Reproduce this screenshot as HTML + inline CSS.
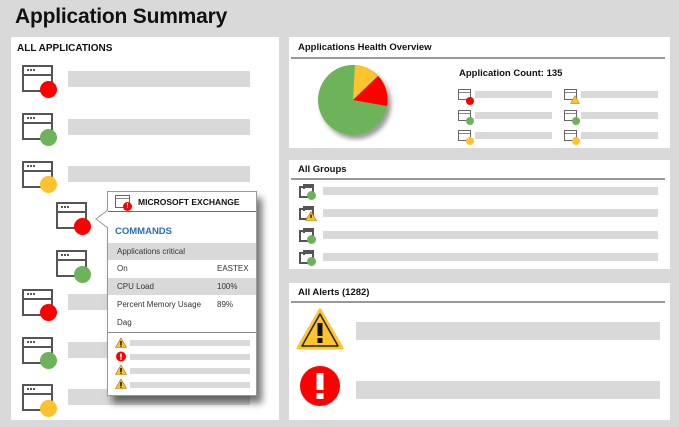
<!DOCTYPE html><html><head><style>
*{margin:0;padding:0;box-sizing:border-box}
body{width:679px;height:427px;background:#d9d9d9;position:relative;overflow:hidden;font-family:"Liberation Sans",sans-serif;color:#111}
.a{position:absolute}
.p{position:absolute;background:#fff}
.bar{position:absolute;background:#d9d9d9}
.win{position:absolute;width:31px;height:27px;border:2.5px solid #555;background:#fff}
.win:before{content:"";position:absolute;left:0;right:0;top:7px;border-top:2px solid #555}
.win:after{content:"";position:absolute;left:3px;top:2px;width:2px;height:2px;background:#555;box-shadow:3px 0 #555,6px 0 #555}
.dot{position:absolute;width:17px;height:17px;border-radius:50%}
.r{background:#f00}.g{background:#6db35a}.y{background:#fdc32d}
.h{position:absolute;font-weight:bold;font-size:10px}
.ln{position:absolute;height:2px;background:#999}
.sw{position:absolute;width:13px;height:11px;border:1.5px solid #666;background:#fff}
.sw:before{content:"";position:absolute;left:0;right:0;top:2px;border-top:1px solid #888}
.sd{position:absolute;width:8px;height:8px;border-radius:50%}
.fold{position:absolute;width:15px;height:12px;border:2px solid #555;background:#fff}
.fold:before{content:"";position:absolute;right:-2px;top:-4px;width:7px;height:3px;border:2px solid #555;border-bottom:none}
.row{position:absolute;left:0;width:148px;height:17px;font-size:8px;color:#333;padding:4px 0 0 9px}
</style></head><body>
<div class="a" style="left:15px;top:5px;font-size:21px;font-weight:bold;letter-spacing:-0.2px">Application Summary</div>

<div class="p" style="left:11px;top:37px;width:268px;height:383px"></div>
<div class="h" style="left:17px;top:43px;font-size:10px">ALL APPLICATIONS</div>

<div class="win" style="left:22px;top:65px"></div><div class="dot r" style="left:40px;top:81px"></div><div class="bar" style="left:68px;top:71px;width:182px;height:16px"></div>
<div class="win" style="left:22px;top:113px"></div><div class="dot g" style="left:40px;top:129px"></div><div class="bar" style="left:68px;top:119px;width:182px;height:16px"></div>
<div class="win" style="left:22px;top:161px"></div><div class="dot y" style="left:40px;top:176px"></div><div class="bar" style="left:68px;top:166px;width:182px;height:16px"></div>
<div class="win" style="left:56px;top:202px"></div><div class="dot r" style="left:74px;top:218px"></div>
<div class="win" style="left:56px;top:250px"></div><div class="dot g" style="left:74px;top:266px"></div>
<div class="win" style="left:22px;top:289px"></div><div class="dot r" style="left:40px;top:304px"></div><div class="bar" style="left:68px;top:294px;width:182px;height:16px"></div>
<div class="win" style="left:22px;top:337px"></div><div class="dot g" style="left:40px;top:352px"></div><div class="bar" style="left:68px;top:342px;width:182px;height:16px"></div>
<div class="win" style="left:22px;top:384px"></div><div class="dot y" style="left:40px;top:400px"></div><div class="bar" style="left:68px;top:389px;width:182px;height:16px"></div>

<!-- popup -->
<div class="a" style="left:107px;top:191px;width:150px;height:205px;background:#fff;border:1px solid #999;box-shadow:5px 7px 7px rgba(0,0,0,.55)">
<div class="sw" style="left:7px;top:3px;width:15px;height:13px"></div>
<div class="a" style="left:15px;top:10px;width:9px;height:9px;border-radius:50%;background:#f00;color:#fff;font-size:7px;font-weight:bold;text-align:center;line-height:9px">!</div>
<div class="h" style="left:30px;top:5px;font-size:8.5px">MICROSOFT EXCHANGE</div>
<div class="a" style="left:0;top:19px;width:148px;height:1px;background:#e33"></div>
<div class="h" style="left:7px;top:34px;font-size:9.5px;color:#2a6db5">COMMANDS</div>
<div class="row" style="top:51px;background:#d9d9d9">Applications critical</div>
<div class="row" style="top:68px">On<span class="a" style="left:109px">EASTEX</span></div>
<div class="row" style="top:86px;background:#d9d9d9">CPU Load<span class="a" style="left:109px">100%</span></div>
<div class="row" style="top:104px">Percent Memory Usage<span class="a" style="left:109px">89%</span></div>
<div class="row" style="top:122px">Dag</div>
<div class="a" style="left:0;top:140px;width:148px;height:1px;background:#888"></div>
<svg class="a" style="left:7px;top:145px" width="12" height="56" viewBox="0 0 12 56">
<path d="M6 1 L11.5 10.5 H0.5Z" fill="#fdc32d" stroke="#a07000" stroke-width=".6"/><rect x="5.3" y="4" width="1.4" height="4" fill="#000"/><rect x="5.3" y="8.6" width="1.4" height="1.2" fill="#000"/>
<circle cx="6" cy="19.5" r="5" fill="#f00"/><rect x="5.2" y="16.5" width="1.6" height="4" fill="#fff"/><rect x="5.2" y="21.3" width="1.6" height="1.4" fill="#fff"/>
<path d="M6 28 L11.5 37.5 H0.5Z" fill="#fdc32d" stroke="#a07000" stroke-width=".6"/><rect x="5.3" y="31" width="1.4" height="4" fill="#000"/><rect x="5.3" y="35.6" width="1.4" height="1.2" fill="#000"/>
<path d="M6 42 L11.5 51.5 H0.5Z" fill="#fdc32d" stroke="#a07000" stroke-width=".6"/><rect x="5.3" y="45" width="1.4" height="4" fill="#000"/><rect x="5.3" y="49.6" width="1.4" height="1.2" fill="#000"/>
</svg>
<div class="bar" style="left:22px;top:148px;width:120px;height:6px"></div>
<div class="bar" style="left:22px;top:162px;width:120px;height:6px"></div>
<div class="bar" style="left:22px;top:176px;width:120px;height:6px"></div>
<div class="bar" style="left:22px;top:190px;width:120px;height:6px"></div>
</div>
<svg class="a" style="left:95px;top:210px" width="14" height="18"><path d="M13 0 L1 9 L13 18" fill="#fff" stroke="#999"/></svg>

<!-- health -->
<div class="p" style="left:289px;top:37px;width:381px;height:111px"></div>
<div class="h" style="left:298px;top:42px;font-size:9.5px">Applications Health Overview</div>
<div class="ln" style="left:291px;top:57px;width:374px"></div>
<svg class="a" style="left:312px;top:60px" width="86" height="86" viewBox="0 0 86 86">
<defs><filter id="s"><feDropShadow dx="3" dy="4" stdDeviation="2.5" flood-opacity=".4"/></filter></defs>
<g filter="url(#s)">
<circle cx="41" cy="40" r="35" fill="#6db35a"/>
<path d="M41 40 L43 5 A35 35 0 0 1 66 16 Z" fill="#fdc32d"/>
<path d="M41 40 L66 16 A35 35 0 0 1 75 46 Z" fill="#f00"/>
</g></svg>
<div class="h" style="left:459px;top:68px;font-size:9.5px">Application Count: 135</div>
<div class="sw" style="left:458px;top:89px"></div><div class="sd r" style="left:466px;top:97px"></div><div class="bar" style="left:475px;top:91px;width:77px;height:7px"></div>
<div class="sw" style="left:458px;top:110px"></div><div class="sd g" style="left:466px;top:117px"></div><div class="bar" style="left:475px;top:112px;width:77px;height:7px"></div>
<div class="sw" style="left:458px;top:130px"></div><div class="sd y" style="left:466px;top:137px"></div><div class="bar" style="left:475px;top:132px;width:77px;height:7px"></div>
<div class="sw" style="left:564px;top:89px"></div><svg class="a" style="left:570px;top:95px" width="10" height="9"><path d="M5 0.5L9.5 8.5H0.5Z" fill="#fdc32d" stroke="#a07000" stroke-width=".5"/></svg><div class="bar" style="left:581px;top:91px;width:77px;height:7px"></div>
<div class="sw" style="left:564px;top:110px"></div><div class="sd g" style="left:572px;top:117px"></div><div class="bar" style="left:581px;top:112px;width:77px;height:7px"></div>
<div class="sw" style="left:564px;top:130px"></div><div class="sd y" style="left:572px;top:137px"></div><div class="bar" style="left:581px;top:132px;width:77px;height:7px"></div>

<!-- groups -->
<div class="p" style="left:289px;top:160px;width:381px;height:109px"></div>
<div class="h" style="left:298px;top:164px;font-size:9.5px">All Groups</div>
<div class="ln" style="left:291px;top:178px;width:374px"></div>
<div class="fold" style="left:299px;top:186px"></div><div class="sd g" style="left:307px;top:191px;width:9px;height:9px"></div><div class="bar" style="left:323px;top:187px;width:335px;height:8px"></div>
<div class="fold" style="left:299px;top:208px"></div><svg class="a" style="left:305px;top:211px" width="12" height="10"><path d="M6 .5L11.5 9.5H.5Z" fill="#fdc32d" stroke="#a07000" stroke-width=".6"/><rect x="5.4" y="3.5" width="1.2" height="3.5"/></svg><div class="bar" style="left:323px;top:209px;width:335px;height:8px"></div>
<div class="fold" style="left:299px;top:230px"></div><div class="sd g" style="left:307px;top:235px;width:9px;height:9px"></div><div class="bar" style="left:323px;top:231px;width:335px;height:8px"></div>
<div class="fold" style="left:299px;top:252px"></div><div class="sd g" style="left:307px;top:257px;width:9px;height:9px"></div><div class="bar" style="left:323px;top:253px;width:335px;height:8px"></div>

<!-- alerts -->
<div class="p" style="left:289px;top:283px;width:381px;height:137px"></div>
<div class="h" style="left:298px;top:287px;font-size:9.5px">All Alerts (1282)</div>
<div class="ln" style="left:291px;top:301px;width:374px"></div>
<svg class="a" style="left:296px;top:308px" width="48" height="43" viewBox="0 0 48 43">
<path d="M24 2 L46 40 H2Z" fill="#fdc32d" stroke="#fdc32d" stroke-width="3" stroke-linejoin="round"/>
<path d="M24 6 L42 38 H6Z" fill="none" stroke="#222" stroke-width="1.5" stroke-linejoin="round"/>
<rect x="21.5" y="15" width="5" height="13" fill="#111"/><rect x="21.5" y="30" width="5" height="5" fill="#111"/>
</svg>
<div class="bar" style="left:356px;top:322px;width:304px;height:18px"></div>
<svg class="a" style="left:299px;top:365px" width="42" height="42"><circle cx="21" cy="21" r="20" fill="#f00"/><rect x="17.5" y="8" width="7" height="17" fill="#fff"/><rect x="17.5" y="28" width="7" height="6" fill="#fff"/></svg>
<div class="bar" style="left:356px;top:381px;width:304px;height:18px"></div>
</body></html>
